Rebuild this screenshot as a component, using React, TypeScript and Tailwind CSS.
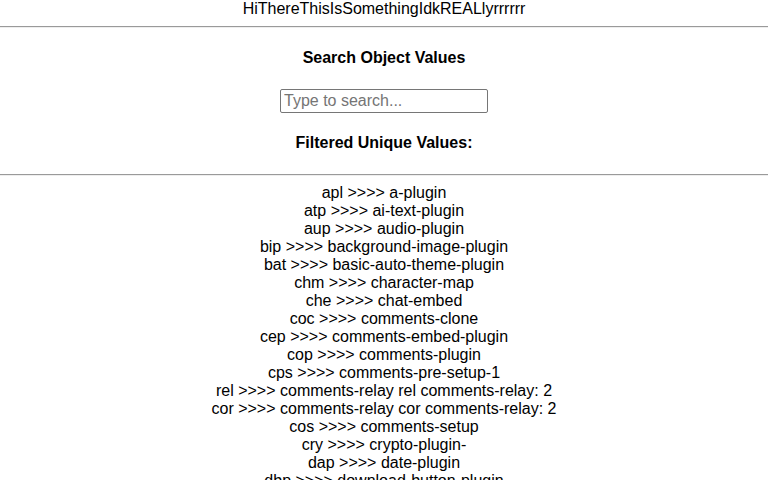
import React from "react";

const items: [string, string][] = [
  ["apl", "a-plugin"],
  ["atp", "ai-text-plugin"],
  ["aup", "audio-plugin"],
  ["bip", "background-image-plugin"],
  ["bat", "basic-auto-theme-plugin"],
  ["chm", "character-map"],
  ["che", "chat-embed"],
  ["coc", "comments-clone"],
  ["cep", "comments-embed-plugin"],
  ["cop", "comments-plugin"],
  ["cps", "comments-pre-setup-1"],
  ["rel", "comments-relay rel comments-relay: 2"],
  ["cor", "comments-relay cor comments-relay: 2"],
  ["cos", "comments-setup"],
  ["cry", "crypto-plugin-"],
  ["dap", "date-plugin"],
  ["dbp", "download-button-plugin"],
];

function Rule() {
  return <hr className="my-2 h-0 border-0 border-t border-b border-t-[#9a9a9a] border-b-[#eeeeee]" />;
}

export default function App() {
  return (
    <div
      className="h-[480px] overflow-hidden bg-white text-black text-[16px] leading-[18px] text-center"
      style={{ fontFamily: '"Liberation Sans", Arial, sans-serif' }}
    >
      <div>HiThereThisIsSomethingIdkREALlyrrrrrr</div>
      <Rule />
      <h4 className="my-[21.28px] font-bold text-[16px] leading-[18.4px]">Search Object Values</h4>
      <div className="flex justify-center">
        <input
          type="text"
          placeholder="Type to search..."
          className="w-[208px] h-[24px] border border-[#767676] rounded-[2px] px-[3px] text-[16px] placeholder:text-[#757575] outline-none"
          style={{ fontFamily: '"Liberation Sans", Arial, sans-serif' }}
        />
      </div>
      <h4 className="my-[21.28px] font-bold text-[16px] leading-[18.4px]">Filtered Unique Values:</h4>
      <Rule />
      <div>
        {items.map(([k, v]) => (
          <div key={k}>
            {k} &gt;&gt;&gt;&gt; {v}
          </div>
        ))}
      </div>
    </div>
  );
}
